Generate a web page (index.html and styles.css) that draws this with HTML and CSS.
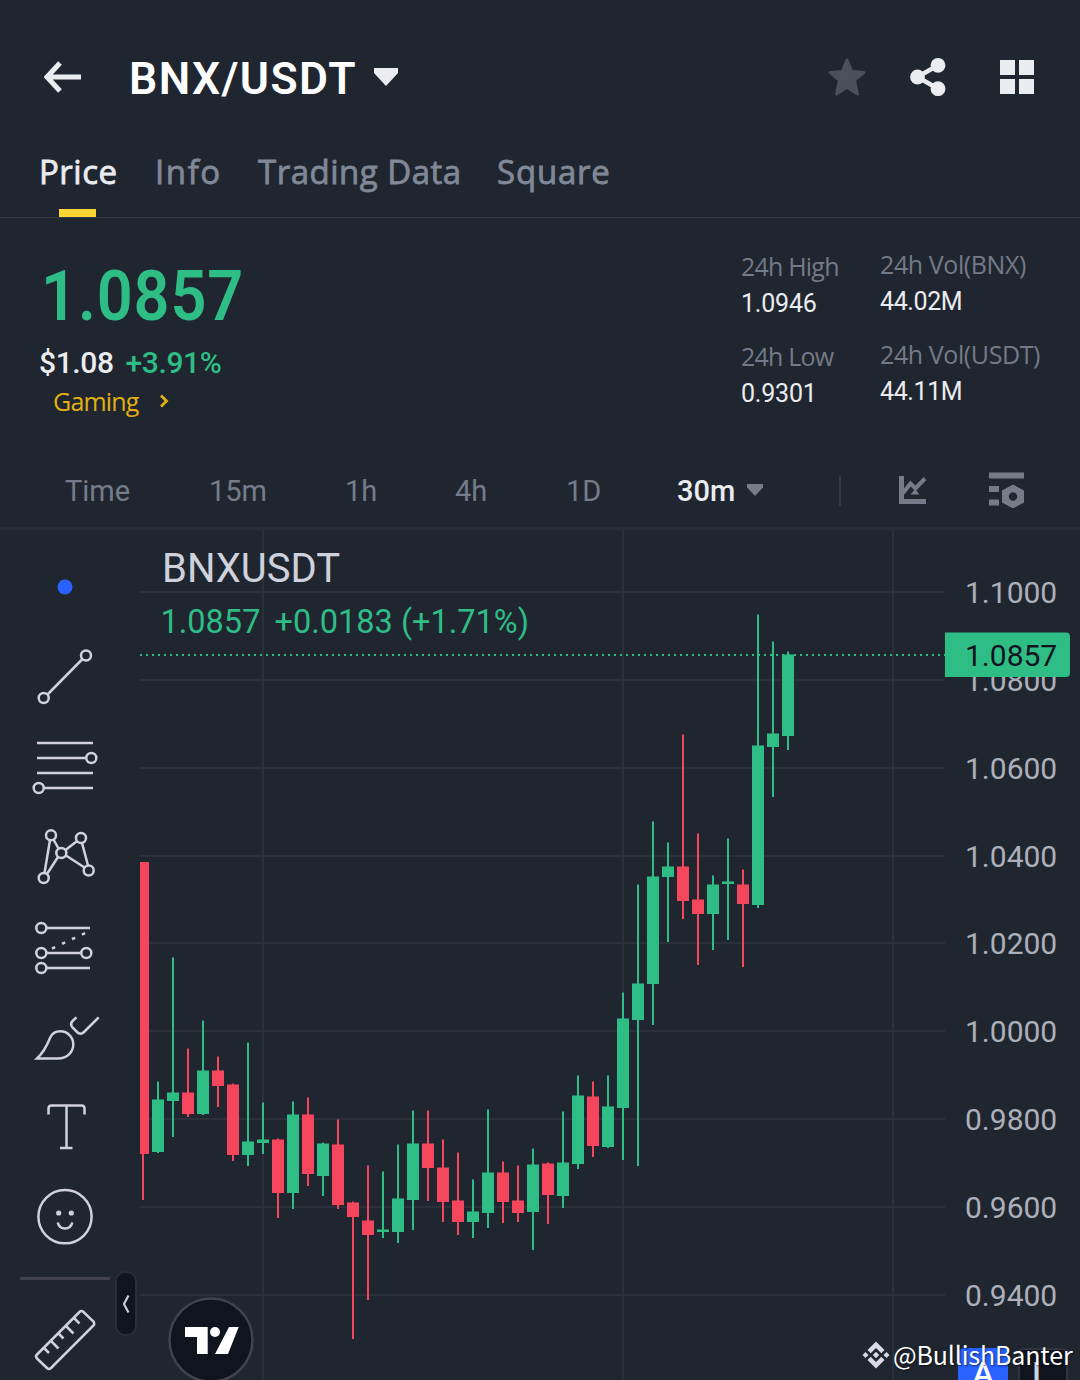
FILE: index.html
```html
<!DOCTYPE html>
<html lang="en">

<head>
    <meta charset="UTF-8">
    <meta name="viewport" content="width=device-width, initial-scale=1.0">
    <title>BNX/USDT</title>
    <link rel="stylesheet" href="styles.css">
</head>

<body>
    <header class="header">
        <svg class="back-icon" viewBox="0 0 38 32">
            <path d="M16 2L3 16l13 14M3 16h34" fill="none" stroke="#eaecef" stroke-width="5"/>
        </svg>
        <h1 class="pair">BNX/USDT</h1>
        <svg class="pair-caret" viewBox="0 0 24 18">
            <path d="M0 0h24v5L12 18 0 5z" fill="#eaecef"/>
        </svg>
        <div class="header-actions">
            <svg width="38" height="40" viewBox="0 0 38 40">
                <path d="M19 3l4.6 11.4 12.2 1-9.3 8 2.9 13.6L19 30.300 8.600 37l2.900-13.600-9.300-8 12.200-1z" fill="#4b505c" stroke="#4b505c" stroke-width="3" stroke-linejoin="round"/>
            </svg>
            <svg width="38" height="40" viewBox="0 0 38 40">
                <path d="M29 8.300L8.500 20 29 31.700" fill="none" stroke="#eaecef" stroke-width="4.500"/>
                <circle cx="8.500" cy="20" r="7.400" fill="#eaecef"/>
                <circle cx="29" cy="8.300" r="7.400" fill="#eaecef"/>
                <circle cx="29" cy="31.700" r="7.400" fill="#eaecef"/>
            </svg>
            <svg class="grid-icon" width="34" height="34" viewBox="0 0 34 34">
                <path d="M0 0h15v15H0zM19 0h15v15H19zM0 19h15v15H0zM19 19h15v15H19z" fill="#eaecef"/>
            </svg>
        </div>
    </header>

    <nav class="tabs">
        <a class="tab tab-price active">Price</a>
        <a class="tab tab-info">Info</a>
        <a class="tab tab-data">Trading Data</a>
        <a class="tab tab-square">Square</a>
    </nav>

    <section class="ticker">
        <div class="ticker-main">
            <div class="last-price">1.0857</div>
            <div class="fiat-row">
                <span class="fiat">$1.08</span>
                <span class="change">+3.91%</span>
            </div>
            <div class="category">
                <span>Gaming</span>
                <svg width="10" height="14" viewBox="0 0 10 14">
                    <path d="M2 1.500L7.500 7 2 12.500" fill="none" stroke="#e3b010" stroke-width="2.800"/>
                </svg>
            </div>
        </div>
        <div class="stats">
            <dl class="stat-col">
                <dt>24h High</dt>
                <dd>1.0946</dd>
                <dt>24h Low</dt>
                <dd>0.9301</dd>
            </dl>
            <dl class="stat-col stat-volume">
                <dt>24h Vol(BNX)</dt>
                <dd>44.02M</dd>
                <dt>24h Vol(USDT)</dt>
                <dd>44.11M</dd>
            </dl>
        </div>
    </section>

    <div class="intervals">
        <span>Time</span>
        <span>15m</span>
        <span>1h</span>
        <span>4h</span>
        <span>1D</span>
        <span class="selected">30m
            <svg width="16" height="12" viewBox="0 0 16 12"><path d="M0 0h16v3.500L8 12 0 3.500z" fill="#757c89"/></svg>
        </span>
        <i class="divider"></i>
        <svg width="28" height="28" viewBox="0 0 28 28">
            <path d="M2.500 0v25.500H27" fill="none" stroke="#757c89" stroke-width="5"/>
            <path d="M4 17l7.500-9.500 5 5L26 2.500" fill="none" stroke="#757c89" stroke-width="4"/>
            <path d="M16 13l4.500 5.500h-9z" fill="#757c89"/>
        </svg>
        <svg width="36" height="36" viewBox="0 0 36 36">
            <path d="M0 0.500h35v6H0zM0 14h10v6H0zM0 27.500h10v6H0z" fill="#757c89"/>
            <path d="M24 12.500l11 6v12l-11 6-11-6v-12zM24 20.300a4.200 4.200 0 1 0 .01 0z" fill="#757c89" fill-rule="evenodd"/>
        </svg>
    </div>

    <main class="chart-area">
        <aside class="tools">
            <svg viewBox="0 0 90 90"><circle cx="45" cy="45" r="7.500" class="dot"/></svg>
            <svg viewBox="0 0 90 90">
                <path d="M27.500 62.500L62.500 27"/>
                <circle cx="66" cy="23.500" r="5"/><circle cx="23.700" cy="66" r="5"/>
            </svg>
            <svg viewBox="0 0 90 90">
                <path d="M17 21h56M17 36h49M17 51h56M24 66h49"/>
                <circle cx="71.300" cy="36" r="5"/><circle cx="18.700" cy="66" r="5"/>
            </svg>
            <svg viewBox="0 0 90 90">
                <path d="M30 28L24.500 61M33.500 27.500l5 9M38 45L27 62M45.500 38l11-8.500M46 43.500l18.500 12M62 31l6 22.500"/>
                <circle cx="31" cy="23.300" r="5"/><circle cx="61" cy="26" r="5"/><circle cx="41.300" cy="41" r="5"/>
                <circle cx="23.700" cy="66" r="5"/><circle cx="68.700" cy="58.500" r="5"/>
            </svg>
            <svg viewBox="0 0 90 90">
                <path d="M26.500 26H70M26.500 51H61M26.500 66H70"/>
                <path d="M32 46.500l34-15.800" stroke-dasharray="3.500 7.500"/>
                <circle cx="21.300" cy="26" r="5"/><circle cx="21.300" cy="51" r="5"/>
                <circle cx="66.300" cy="51" r="5"/><circle cx="21.300" cy="66" r="5"/>
            </svg>
            <svg viewBox="0 0 90 90">
                <path d="M17 66.500C24 60 28 51 30 46c2-4.500 6-6.700 10.300-6.700a13 13 0 0 1 13 13c0 8-6.300 14.200-15.300 14.200z"/>
                <path d="M56.500 25.300L53 28.500q-3.500 3.500-.5 7l4.500 4.500q3.500 3.500 7 0l14.700-14.700"/>
            </svg>
            <svg viewBox="0 0 90 90">
                <path d="M28.500 32.500v-6q0-3 3-3h30q3 0 3 3v6M46.500 23.500V66M40 66h12.500"/>
            </svg>
            <svg viewBox="0 0 90 90">
                <circle cx="45" cy="44.700" r="26.600"/>
                <path d="M37.700 50.500q1.500 6 7.300 6t7.300-6"/>
                <circle cx="38.700" cy="41" r="2.600" class="eye"/><circle cx="51.300" cy="41" r="2.600" class="eye"/>
            </svg>
            <hr class="tools-line">
            <svg viewBox="0 0 90 90">
                <path d="M59.500 17L17 59.500q-2 2 0 4l10 9.500q2 2 4 0L73.500 30.500q1.500-2 0-4L63.500 17q-2-2-4 0z"/>
                <path d="M23.500 52.500l5.500 5.500M31 46l7.500 7.500M38 38l5.500 5.500M46 31l7.500 7.500M54 23l5.500 5.500"/>
            </svg>
        </aside>

        <svg class="chart" viewBox="140 530 940 850">
            <g id="grid"></g>
            <g id="candles"></g>
            <path class="price-line" d="M140 655H945"/>
            <text class="symbol" x="162" y="581.500">BNXUSDT</text>
            <text class="legend" x="160.500" y="633">1.0857</text>
            <text class="legend" x="274.500" y="633">+0.0183 (+1.71%)</text>
            <g id="axis"></g>
            <path class="price-tag" d="M945 632.500h121q4 0 4 4v36.500q0 4-4 4H945z"/>
            <text class="price-tag-text" x="965" y="666">1.0857</text>
        </svg>

        <button class="collapse">
            <svg width="8" height="20" viewBox="0 0 8 20"><path d="M6.500 1.500L2 10l4.500 8.500" fill="none" stroke="#c9cbd5" stroke-width="2.200"/></svg>
        </button>

        <svg class="tv-logo" viewBox="0 0 86 86">
            <circle cx="43" cy="43" r="41.500" fill="#10141f" stroke="#40424e" stroke-width="2.500"/>
            <path d="M17 30h22.700v27H29V40H17zM61 30h9.700L60 57H47z" fill="#fff"/>
            <circle cx="47" cy="35" r="5" fill="#fff"/>
        </svg>

        <div class="scale-buttons">
            <span class="scale-auto">A</span>
            <span class="scale-log">L</span>
        </div>

        <div class="watermark">
            <svg width="28" height="28" viewBox="0 0 28 28">
                <path d="M14 .5l8.500 8.500-3.200 3.200L14 6.900l-5.300 5.300L5.500 9zM14 27.500L5.500 19l3.200-3.200 5.300 5.300 5.300-5.300 3.200 3.200zM14 10.800l3.200 3.200-3.200 3.200-3.200-3.200zM3.500 11l3 3-3 3-3-3zM24.500 11l3 3-3 3-3-3z" fill="#d9dae6"/>
            </svg>
            <span>@BullishBanter</span>
        </div>
    </main>

    <script src="script.js"></script>
</body>

</html>
```

FILE: styles.css
```css
* {
    margin: 0;
    padding: 0;
    box-sizing: border-box;
}

body {
    width: 1080px;
    height: 1380px;
    overflow: hidden;
    background-color: #202630;
    color: #eaecef;
    font-family: Roboto, "Open Sans", sans-serif;
}

svg {
    display: block;
    flex-shrink: 0;
}

/* Header */
.header {
    display: flex;
    align-items: center;
    height: 154px;
    padding: 0 46px 0 44px;
}

.back-icon {
    width: 38px;
    height: 32px;
}

.pair {
    width: 244px;
    margin-left: 47px;
    padding-top: 4px;
    font-size: 44.500px;
    font-weight: 600;
    color: #fff;
    letter-spacing: 1.4px;
    white-space: nowrap;
}

.pair-caret {
    width: 24px;
    height: 18px;
    margin-left: 1px;
}

.header-actions {
    display: flex;
    align-items: center;
    gap: 43px;
    margin-left: auto;
}

.grid-icon {
    margin-left: 10px;
}

/* Tabs */
.tabs {
    display: flex;
    height: 64px;
    padding-left: 39px;
    border-bottom: 1px solid #323843;
    font-family: "Open Sans", sans-serif;
    font-size: 33px;
    line-height: 36px;
    letter-spacing: 0.5px;
    color: #808897;
    -webkit-text-stroke: 0.8px currentColor;
}

.tab {
    display: flex;
    flex-direction: column;
    justify-content: space-between;
    white-space: nowrap;
}

.tab-price {
    width: 116px;
}

.tab-info {
    width: 103px;
    letter-spacing: 1.6px;
}

.tab-data {
    width: 239px;
}

.tab-square {
    letter-spacing: 0.8px;
}

.tab.active {
    color: #eaecef;
}

.tab.active::after {
    content: "";
    width: 37px;
    height: 8px;
    margin-left: 20px;
    background-color: #fcd535;
}

/* Ticker */
.ticker {
    display: flex;
    justify-content: space-between;
    height: 237px;
    padding: 31px 0 0 39px;
}

.last-price {
    margin: 11px 0 0 2px;
    font-size: 70px;
    font-weight: 600;
    line-height: 73px;
    letter-spacing: 1px;
    color: #2ebd85;
    transform: scaleX(0.9);
    transform-origin: left;
}

.fiat-row {
    display: flex;
    gap: 12px;
    margin-top: 12px;
    font-size: 30px;
    font-weight: 500;
    line-height: 36px;
    letter-spacing: -0.4px;
}

.change {
    color: #2ebd85;
}

.category {
    display: flex;
    align-items: center;
    gap: 20px;
    margin: 5px 0 0 14px;
    font-family: "Open Sans", sans-serif;
    font-size: 25px;
    line-height: 30px;
    letter-spacing: -0.8px;
    color: #e3b010;
}

.stats {
    display: flex;
    width: 339px;
    font-size: 25px;
    line-height: 35px;
}

.stat-col {
    width: 139px;
    white-space: nowrap;
}

.stat-volume {
    margin-top: -2px;
}

.stat-col dt {
    font-family: "Open Sans", sans-serif;
    letter-spacing: -0.8px;
    color: #737a87;
}

.stat-volume dt {
    letter-spacing: -0.4px;
}

.stat-col dd {
    margin-bottom: 18px;
    padding-top: 2px;
    letter-spacing: -0.2px;
}

.stat-volume dd {
    letter-spacing: -0.4px;
}

/* Intervals */
.intervals {
    display: grid;
    grid-template-columns: 144px 136px 110px 111px 111px 162px 60px 90px 36px;
    align-items: center;
    height: 75px;
    padding-left: 65px;
    border-bottom: 3px solid #272c36;
    font-size: 29px;
    color: #757c89;
}

.intervals > svg {
    margin-top: -2px;
}

.intervals .selected {
    display: flex;
    align-items: center;
    gap: 12px;
    font-weight: 500;
    color: #eaecef;
}

.intervals .selected svg {
    margin-top: -3px;
}

.divider {
    width: 2px;
    height: 30px;
    background-color: #343944;
}

/* Chart */
.chart-area {
    position: relative;
    display: flex;
    height: 850px;
}

.tools {
    width: 140px;
    padding: 12px 20px 0;
}

.tools svg {
    width: 90px;
    height: 90px;
    fill: none;
    stroke: #d0d1dc;
    stroke-width: 2.500;
}

.tools .dot {
    fill: #2962ff;
    stroke: none;
}

.tools .eye {
    fill: #d0d1dc;
    stroke: none;
}

.tools-line {
    width: 90px;
    height: 3px;
    margin: 15px 0;
    border: none;
    background-color: #40434e;
}

.chart {
    width: 940px;
    height: 850px;
}

.grid-line {
    stroke: #2b303a;
    stroke-width: 2;
}

.up {
    fill: #2ebd85;
}

.down {
    fill: #f6465d;
}

.price-line {
    stroke: #2ebd85;
    stroke-width: 2;
    stroke-dasharray: 2 4;
}

.symbol {
    font-size: 40px;
    fill: #cfd1dc;
}

.legend {
    font-size: 32.500px;
    fill: #2ebd85;
}

.axis-label {
    font-size: 30px;
    fill: #adb0bb;
}

.price-tag {
    fill: #2ebd85;
}

.price-tag-text {
    font-size: 30px;
    fill: #10141f;
}

.collapse {
    position: absolute;
    left: 115px;
    top: 741px;
    width: 22px;
    height: 65px;
    display: flex;
    align-items: center;
    justify-content: center;
    border: 2px solid #282d38;
    border-radius: 10px;
    background-color: #10141f;
}

.tv-logo {
    position: absolute;
    left: 168px;
    top: 767px;
    width: 86px;
    height: 86px;
}

.scale-buttons {
    position: absolute;
    left: 958px;
    top: 818px;
    display: flex;
    gap: 10px;
    font-size: 32px;
    font-weight: 500;
    line-height: 50px;
    text-align: center;
}

.scale-auto,
.scale-log {
    width: 50px;
    height: 50px;
    border-radius: 6px;
    color: #fff;
}

.scale-log {
    border: 2px solid #2f343f;
    background-color: #10141f;
    color: #cfd1dc;
    line-height: 46px;
    padding-right: 4px;
}

.scale-auto {
    border-radius: 6px 0 0 0;
    background-color: #2962ff;
}

.watermark {
    position: absolute;
    left: 862px;
    top: 807px;
    display: flex;
    align-items: center;
    gap: 3px;
    height: 36px;
    font-family: "Noto Sans CJK SC", sans-serif;
    font-size: 25px;
    line-height: 34px;
    letter-spacing: -0.15px;
    color: #fff;
    text-shadow: 1px 1px 2px rgba(0, 0, 0, 0.6);
}

.watermark span {
    margin-top: -2px;
}
```

FILE: script.js
```js
const SVG_NS = 'http://www.w3.org/2000/svg';

// [direction, high, body top, body bottom, low]
const candles = [
    ['down', 862, 862, 1154, 1200],
    ['up', 1081.5, 1099.5, 1152, 1153],
    ['up', 957.5, 1092.5, 1101, 1137],
    ['down', 1048.5, 1092.5, 1114, 1117],
    ['up', 1020.5, 1070.5, 1114, 1115],
    ['down', 1056.5, 1070.5, 1086, 1107],
    ['down', 1083.5, 1084.5, 1155, 1161],
    ['up', 1042.5, 1141.5, 1155, 1166],
    ['up', 1102.5, 1139.5, 1143, 1154],
    ['down', 1138.5, 1139.5, 1193, 1218],
    ['up', 1101.5, 1114.5, 1193, 1209],
    ['down', 1097.5, 1114.5, 1174, 1186],
    ['up', 1142.5, 1143.5, 1176, 1196],
    ['down', 1119.5, 1144.5, 1205, 1209],
    ['down', 1201.5, 1202.5, 1217, 1339],
    ['down', 1165.5, 1220.5, 1235, 1300],
    ['up', 1171.5, 1229.5, 1232, 1238],
    ['up', 1144.5, 1198.5, 1232, 1243],
    ['up', 1110.5, 1143.5, 1200, 1230],
    ['down', 1110.5, 1143.5, 1168, 1201],
    ['down', 1139.5, 1167.5, 1202, 1222],
    ['down', 1152.5, 1200.5, 1222, 1235],
    ['up', 1179.5, 1211.5, 1222, 1238],
    ['up', 1109.5, 1172.5, 1213, 1228],
    ['down', 1161.5, 1172.5, 1202, 1223],
    ['down', 1165.5, 1200.5, 1213, 1222],
    ['up', 1148.5, 1164.5, 1212, 1250],
    ['down', 1162.5, 1163.5, 1195, 1224],
    ['up', 1111.5, 1162.5, 1196, 1208],
    ['up', 1075.5, 1095.5, 1164, 1169],
    ['down', 1081.5, 1096.5, 1146, 1157],
    ['up', 1075.5, 1106.5, 1147, 1148],
    ['up', 992.5, 1018.5, 1108, 1160],
    ['up', 884.5, 983.5, 1020, 1166],
    ['up', 821.5, 876.5, 984, 1025],
    ['up', 842.5, 866.5, 877, 942],
    ['down', 734.5, 866.5, 901, 919],
    ['down', 833.5, 899.5, 914, 965],
    ['up', 875.5, 884.5, 914, 950],
    ['up', 838.5, 881.5, 884, 940],
    ['down', 869.5, 884.5, 904, 967],
    ['up', 614.5, 745.5, 905, 908],
    ['up', 641.5, 733.5, 747, 797],
    ['up', 651.5, 654.5, 736, 750]
];

const priceLevels = [
    ['1.1000', 592], ['1.0800', 680], ['1.0600', 768], ['1.0400', 856], ['1.0200', 943],
    ['1.0000', 1031], ['0.9800', 1119], ['0.9600', 1207], ['0.9400', 1295]
];

function add(parentId, tag, attrs, text) {
    const el = document.createElementNS(SVG_NS, tag);
    for (const key in attrs) {
        el.setAttribute(key, attrs[key]);
    }
    if (text) {
        el.textContent = text;
    }
    document.getElementById(parentId).appendChild(el);
}

// Grid and price axis
[263, 623, 893].forEach(x => {
    add('grid', 'line', { class: 'grid-line', x1: x, x2: x, y1: 530, y2: 1380 });
});

priceLevels.forEach(([label, y]) => {
    add('grid', 'line', { class: 'grid-line', x1: 140, x2: 945, y1: y, y2: y });
    add('axis', 'text', { class: 'axis-label', x: 965, y: y + 11 }, label);
});

// Candles
candles.forEach(([dir, high, top, bottom, low], i) => {
    const x = 143 + i * 15;
    add('candles', 'rect', { class: dir, x: x - 1, y: high, width: 2, height: low - high });
    add('candles', 'rect', { class: dir, x: x - 6, y: top, width: 12, height: bottom - top });
});
```
